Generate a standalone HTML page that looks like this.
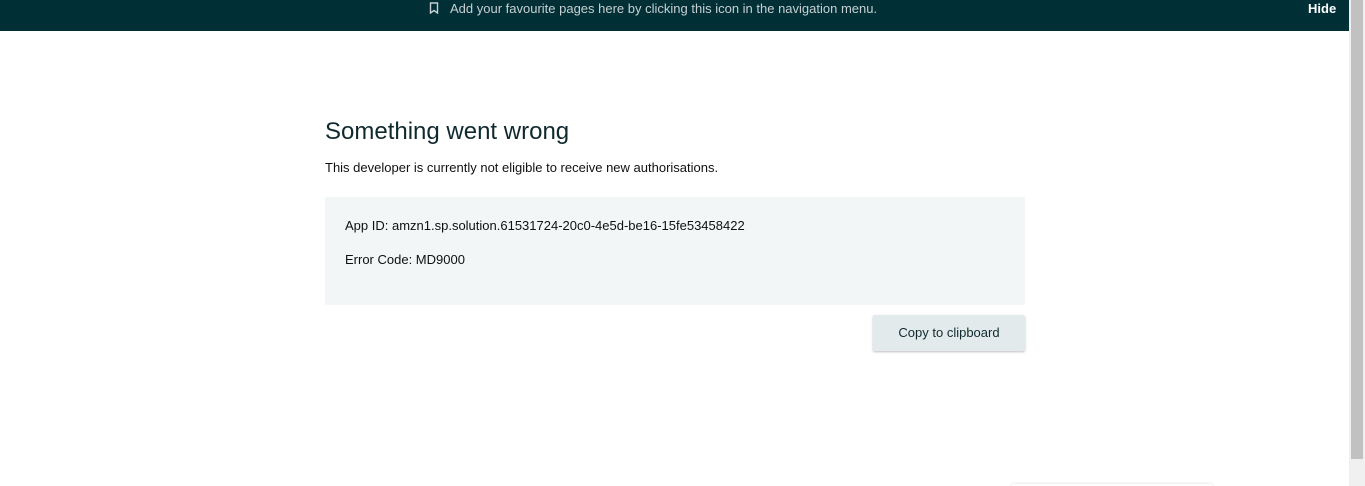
<!DOCTYPE html>
<html><head><meta charset="utf-8"><style>
html,body{margin:0;padding:0;width:1365px;height:486px;overflow:hidden;background:#fff;font-family:"Liberation Sans",Arial,sans-serif;position:relative}
.bar{position:absolute;left:0;top:0;width:1349px;height:31px;background:#002f36}
.bar .msg{position:absolute;left:429px;top:1px;color:#c8d0d2;font-size:13px;line-height:16px}
.bar .hide{position:absolute;left:1308px;top:1px;color:#fff;font-size:13px;line-height:16px;font-weight:bold}
.sb{position:absolute;left:1349px;top:0;width:16px;height:486px;background:#f0f0f0}
.sb div{position:absolute;left:2px;top:0;width:12px;height:459px;background:#c1c1c1}
h1{position:absolute;left:325px;top:118px;margin:0;font-weight:normal;font-size:24px;color:#0f2a2f;line-height:28px}
.sub{position:absolute;left:325px;top:160px;font-size:13px;color:#0f1111;line-height:16px}
.box{position:absolute;left:325px;top:197px;width:700px;height:108px;background:#f3f6f7}
.box p{position:absolute;left:20px;margin:0;font-size:13px;color:#0f1111;line-height:16px}
.btn{position:absolute;left:873px;top:315px;width:152px;height:36px;background:#e3eaec;border-radius:2px;box-shadow:0 1px 2px rgba(0,0,0,.25);font-size:13px;color:#0f2a2f;text-align:center;line-height:35px}
.foot{position:absolute;left:1012px;top:484px;width:200px;height:4px;box-shadow:0 0 3px rgba(0,0,0,.15);border-radius:3px}
</style></head><body>
<div class="bar">
<div class="msg"><svg width="10" height="12" viewBox="0 0 10 12" style="vertical-align:-1px;margin-right:11px"><path d="M1.5 1h7v10l-3.5-2.5L1.5 11z" fill="none" stroke="#c8d0d2" stroke-width="1.4"/></svg>Add your favourite pages here by clicking this icon in the navigation menu.</div>
<div class="hide">Hide</div>
</div>
<div class="sb"><div></div></div>
<h1>Something went wrong</h1>
<div class="sub">This developer is currently not eligible to receive new authorisations.</div>
<div class="box">
<p style="top:21px">App ID: amzn1.sp.solution.61531724-20c0-4e5d-be16-15fe53458422</p>
<p style="top:55px">Error Code: MD9000</p>
</div>
<div class="btn">Copy to clipboard</div>
<div class="foot"></div>
</body></html>
